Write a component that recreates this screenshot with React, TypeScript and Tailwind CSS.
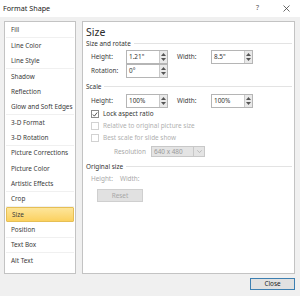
import React from "react";

const items = [
  { label: "Fill", sep: true },
  { label: "Line Color" },
  { label: "Line Style", sep: true },
  { label: "Shadow" },
  { label: "Reflection" },
  { label: "Glow and Soft Edges", sep: true },
  { label: "3-D Format" },
  { label: "3-D Rotation", sep: true },
  { label: "Picture Corrections" },
  { label: "Picture Color" },
  { label: "Artistic Effects", sep: true },
  { label: "Crop", sep: true },
  { label: "Size", active: true },
  { label: "Position", sep: true },
  { label: "Text Box", sep: true },
  { label: "Alt Text" },
];

function Spinner() {
  return (
    <div className="w-[8px] h-full flex flex-col items-center justify-center gap-[2px] bg-[#e9e9e9] border-l border-[#c9c9c9]">
      <svg width="5" height="3" viewBox="0 0 5 3">
        <path d="M0 3 L2.5 0 L5 3 Z" fill="#555" />
      </svg>
      <svg width="5" height="3" viewBox="0 0 5 3">
        <path d="M0 0 L2.5 3 L5 0 Z" fill="#555" />
      </svg>
    </div>
  );
}

function NumInput({ value }: { value: string }) {
  return (
    <div className="w-[42px] h-[14px] flex border border-[#b5b5b5] bg-white">
      <div className="flex-1 pl-[2px] leading-[12px] text-[#333]">{value}</div>
      <Spinner />
    </div>
  );
}

function Section({ title }: { title: string }) {
  return (
    <div className="flex items-center h-[9px] pl-[3px] pr-[2px] gap-[3px]">
      <span className="leading-[9px] text-[#333]">{title}</span>
      <div className="flex-1 h-px bg-[#e3e3e3]" />
    </div>
  );
}

function Check({ label, checked, disabled }: { label: string; checked?: boolean; disabled?: boolean }) {
  return (
    <div className="flex items-center h-[12px] pl-[8px] gap-[4px]">
      <div
        className={`w-[8px] h-[8px] border flex items-center justify-center bg-white ${
          disabled ? "border-[#d2d2d2]" : "border-[#8a8a8a]"
        }`}
      >
        {checked && (
          <svg width="7" height="7" viewBox="0 0 7 7">
            <path d="M1 3.5 L2.8 5.4 L6 1.2" fill="none" stroke="#333" strokeWidth="1" />
          </svg>
        )}
      </div>
      <span className={disabled ? "text-[#b0b0b0]" : "text-[#333]"}>{label}</span>
    </div>
  );
}

export default function App() {
  return (
    <div
      className="w-[300px] h-[296px] bg-[#f0f0f0] text-[6.4px] text-[#3a3a3a] overflow-hidden flex flex-col whitespace-nowrap"
      style={{ fontFamily: '"Noto Sans", "Open Sans", sans-serif' }}
    >
      {/* Title bar */}
      <div className="h-[17px] bg-white flex items-center pl-[3px] pr-[10px] text-[7.2px] text-[#222]">
        <span>Format Shape</span>
        <span className="ml-auto mr-[24px] text-[7px] text-[#555]">?</span>
        <svg width="7" height="7" viewBox="0 0 7 7">
          <path d="M0.5 0.5 L6.5 6.5 M6.5 0.5 L0.5 6.5" stroke="#444" strokeWidth="0.8" />
        </svg>
      </div>

      <div className="flex gap-[6px] pl-[4px] pr-[5px] pt-[4px]">
        {/* Left list */}
        <div className="w-[72px] h-[253px] bg-white border border-[#c3c3c3] pt-[1px] px-[1px]">
          {items.map((it) => (
            <div
              key={it.label}
              className={`h-[15.33px] flex items-center pl-[5px] ${
                it.active
                  ? "bg-gradient-to-b from-[#fde59a] to-[#fbd15e] border border-[#e6bf55] rounded-[1px] pl-[4px]"
                  : it.sep
                  ? "border-b border-[#f0f0f0]"
                  : ""
              }`}
            >
              {it.label}
            </div>
          ))}
        </div>

        {/* Right panel */}
        <div className="flex-1 h-[253px] bg-white border border-[#c3c3c3] flex flex-col pt-[3px]">
          <div className="h-[14px] leading-[14px] pl-[3px] text-[10.5px] text-[#2b2b2b]">Size</div>
          <Section title="Size and rotate" />

          <div className="flex items-center mt-[2px] pl-[8px] h-[14px]">
            <span className="w-[35px]">Height:</span>
            <NumInput value={'1.21"'} />
            <span className="w-[34px] ml-[9px]">Width:</span>
            <NumInput value={'8.5"'} />
          </div>
          <div className="flex items-center pl-[8px] h-[14px]">
            <span className="w-[35px]">Rotation:</span>
            <NumInput value="0°" />
          </div>

          <div className="mt-[4px]">
            <Section title="Scale" />
          </div>
          <div className="flex items-center mt-[3px] pl-[8px] h-[14px]">
            <span className="w-[35px]">Height:</span>
            <NumInput value="100%" />
            <span className="w-[34px] ml-[9px]">Width:</span>
            <NumInput value="100%" />
          </div>
          <Check label="Lock aspect ratio" checked />
          <Check label="Relative to original picture size" disabled />
          <Check label="Best scale for slide show" disabled />

          <div className="flex items-center mt-[2px] h-[11px] pl-[31px]">
            <span className="w-[37px] text-[#a8a8a8]">Resolution</span>
            <div className="w-[54px] h-[11px] flex border border-[#c8c8c8] bg-[#e4e4e4]">
              <span className="flex-1 pl-[2px] leading-[9px] text-[#9a9a9a]">640 x 480</span>
              <div className="w-[11px] border-l border-[#c8c8c8] flex items-center justify-center">
                <svg width="5" height="3" viewBox="0 0 5 3">
                  <path d="M0.3 0.3 L2.5 2.6 L4.7 0.3" fill="none" stroke="#aaa" strokeWidth="0.7" />
                </svg>
              </div>
            </div>
          </div>

          <div className="mt-[5px]">
            <Section title="Original size" />
          </div>
          <div className="flex items-center mt-[3px] h-[10px] pl-[8px] text-[#a8a8a8]">
            <span className="w-[29px]">Height:</span>
            <span>Width:</span>
          </div>

          <div className="mt-[5px] ml-[14px] w-[46px] h-[13px] bg-[#e1e1e1] border border-[#cfcfcf] flex items-center justify-center text-[#a8a8a8]">
            Reset
          </div>
        </div>
      </div>

      {/* Footer */}
      <div className="flex justify-end pr-[5px] pt-[4px]">
        <div className="w-[45px] h-[12px] bg-[#e1e1e1] border border-[#3c7fb1] flex items-center justify-center text-[#222]">
          Close
        </div>
      </div>
    </div>
  );
}
